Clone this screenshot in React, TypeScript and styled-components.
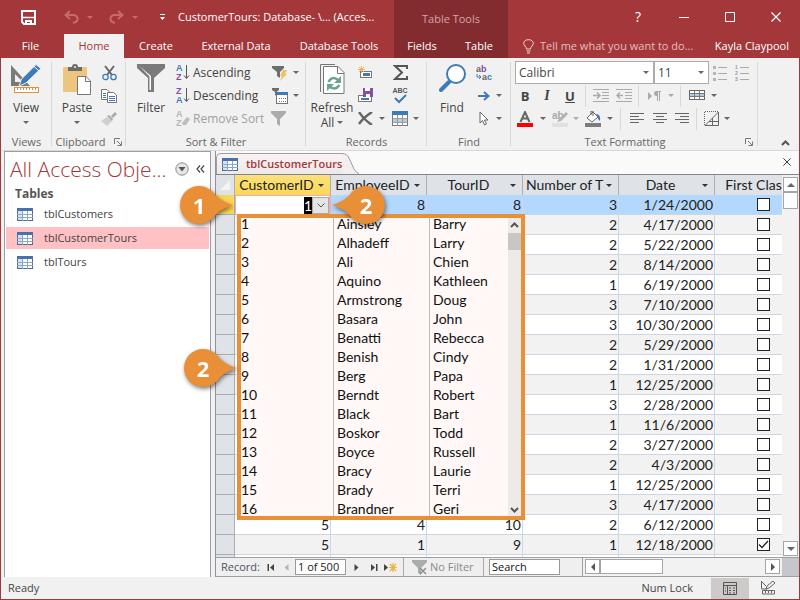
import React from "react";
import styled, { createGlobalStyle, css } from "styled-components";

const ui = `"Open Sans", "Noto Sans", sans-serif`;
const calibri = `Lato, "Open Sans", sans-serif`;

const c = {
  brand: "#a4373a",
  brandDark: "#832c2f",
  ribbon: "#f1f1f1",
  line: "#d8d8d8",
  text: "#444444",
  muted: "#666666",
  off: "#a0a0a0",
  blue: "#3f7ab8",
  purple: "#8250a8",
  callout: "#e88f38",
};

const Global = createGlobalStyle`
  *, *::before, *::after { box-sizing: border-box; }
  html, body, #root { height: 100%; }
  body { margin: 0; font: 12px/16px ${ui}; color: ${c.text}; background: ${c.ribbon}; }
  button, input, select { font: inherit; color: inherit; margin: 0; padding: 0; border: 0; background: none; border-radius: 0; outline: none; }
  button { white-space: nowrap; }
  svg { display: block; flex: none; }
`;

const Window = styled.div`
  display: flex;
  flex-direction: column;
  height: 100vh;
  min-height: 600px;
  min-width: 800px;
  overflow: hidden;
  background: ${c.ribbon};
  border: solid ${c.brand};
  border-width: 0 1px 1px 1px;
`;

/* ---------- title and tabs ---------- */
const Header = styled.header`
  display: grid;
  grid-template-columns: 393px 114px 1fr;
  background: ${c.brand};
  color: #fff;
  font-size: 11px;
`;
const HeaderCol = styled.div<{ $dark?: boolean }>`
  display: flex;
  flex-direction: column;
  min-width: 0;
  background: ${(p) => (p.$dark ? c.brandDark : "transparent")};
`;
const TitleRow = styled.div<{ $justify?: string }>`
  display: flex;
  align-items: center;
  justify-content: ${(p) => p.$justify || "flex-start"};
  height: 34px;
`;
const ContextTitle = styled.div`
  height: 34px;
  padding-top: 3px;
  line-height: 32px;
  text-align: center;
  color: #d3a5a6;
`;
const QuickBar = styled.div`
  display: flex;
  align-items: center;
  width: 177px;
  padding-left: 20px;
`;
const QuickButton = styled.button<{ $after: number }>`
  margin-right: ${(p) => p.$after}px;
`;
const DocTitle = styled.h1`
  margin: 0;
  font: 11px/20px ${ui};
  white-space: nowrap;
`;
const CaptionButton = styled.button`
  display: flex;
  align-items: center;
  justify-content: center;
  width: 46px;
  height: 32px;
  font-size: 14px;
`;
const TabRow = styled.div`
  display: flex;
  height: 24px;
`;
const RibbonTab = styled.button<{ $w: number; $active?: boolean; $first?: boolean }>`
  width: ${(p) => p.$w}px;
  padding-right: ${(p) => (p.$first ? 4 : 0)}px;
  text-align: center;
  line-height: 24px;
  ${(p) => p.$active && css`background: ${c.ribbon}; color: ${c.brand};`}
`;
const TellMe = styled.label`
  display: flex;
  flex: 1;
  align-items: center;
  gap: 6px;
  min-width: 0;
  padding-left: 15px;
`;
const TellInput = styled.input`
  flex: 1;
  min-width: 0;
  &::placeholder { color: #e5bfc0; opacity: 1; }
`;
const Account = styled.button`
  padding: 0 10px 0 6px;
`;

/* ---------- ribbon ---------- */
const Ribbon = styled.div`
  display: flex;
  height: 93px;
  border-bottom: 1px solid ${c.line};
  background: ${c.ribbon};
`;
const Group = styled.section<{ $w: number }>`
  display: flex;
  flex-direction: column;
  width: ${(p) => p.$w}px;
  position: relative;
  &::after {
    content: "";
    position: absolute;
    right: 0;
    top: 4px;
    bottom: 4px;
    width: 1px;
    background: ${c.line};
  }
`;
const GroupBody = styled.div`
  display: flex;
  height: 76px;
  padding: 3px 0 0 3px;
`;
const GroupLabel = styled.div`
  display: flex;
  align-items: center;
  justify-content: center;
  height: 16px;
  color: ${c.muted};
  font-size: 11px;
  white-space: nowrap;
`;
const Launcher = styled.button<{ $end?: boolean }>`
  margin-left: ${(p) => (p.$end ? "auto" : "9px")};
  margin-right: ${(p) => (p.$end ? "5px" : "0")};
`;
const LabelFill = styled.span`
  flex: 1;
  text-align: center;
  padding-right: 6px;
`;
const Big = styled.button<{ $w: number }>`
  display: flex;
  flex-direction: column;
  align-items: center;
  width: ${(p) => p.$w}px;
  padding-top: 3px;
`;
const BigIcon = styled.span`
  display: flex;
  align-items: flex-start;
  height: 36px;
`;
const BigText = styled.span`
  height: 15px;
  line-height: 15px;
`;
const BigLine = styled.span`
  display: flex;
  align-items: center;
  gap: 3px;
  height: 15px;
  line-height: 15px;
`;
const Stack = styled.div`
  display: grid;
  grid-auto-rows: 23px;
  align-items: center;
`;
const ToolRow = styled.div`
  display: flex;
  align-items: center;
  height: 23px;
`;
const Tool = styled.button<{ $w: number; $gap?: number }>`
  display: flex;
  align-items: center;
  justify-content: center;
  gap: ${(p) => p.$gap || 0}px;
  width: ${(p) => p.$w}px;
  height: 22px;
`;
const Glyph = styled(Tool)<{ $style: "bold" | "italic" | "underline" }>`
  font-size: 13px;
  ${(p) => p.$style === "bold" && css`font-weight: 700;`}
  ${(p) => p.$style === "italic" && css`font: italic 700 14px "Liberation Serif", serif;`}
  ${(p) => p.$style === "underline" && css`font-weight: 700; text-decoration: underline;`}
`;
const SortButton = styled.button<{ $off?: boolean }>`
  display: flex;
  align-items: center;
  gap: 3px;
  width: 94px;
  padding-left: 3px;
  color: ${(p) => (p.$off ? c.off : c.text)};
`;
const Divider = styled.span<{ $m: number }>`
  width: 1px;
  height: 22px;
  margin: 0 ${(p) => p.$m}px;
  background: ${c.line};
`;
const Combo = styled.span<{ $w: number }>`
  display: flex;
  align-items: center;
  position: relative;
  width: ${(p) => p.$w}px;
  height: 23px;
  border: 1px solid #ababab;
  background: #fff;
  svg { position: absolute; right: 4px; pointer-events: none; }
`;
const ComboSelect = styled.select`
  appearance: none;
  width: 100%;
  height: 100%;
  padding-left: 3px;
`;
const ComboGap = styled.span`
  width: 1px;
`;
const Collapse = styled.button`
  margin: auto 9px 4px auto;
`;

/* ---------- body ---------- */
const Body = styled.main`
  display: flex;
  flex: 1;
  min-height: 0;
  position: relative;
`;
const NavPane = styled.nav`
  width: 207px;
  margin-left: 3px;
  padding: 0 1px;
  border: solid #9a9ea6;
  border-width: 1px 1px 0 1px;
  background: #fff;
`;
const NavHead = styled.div`
  display: flex;
  align-items: center;
  height: 33px;
  padding: 0 4px;
`;
const NavTitle = styled.h2`
  flex: 1;
  min-width: 0;
  margin: 0;
  font: 300 21px/34px ${ui};
  color: ${c.brand};
  white-space: nowrap;
`;
const NavToggle = styled.button`
  margin-left: 7px;
`;
const NavSection = styled.h3`
  margin: 0;
  padding-left: 9px;
  font: 700 12px/18px ${ui};
  color: #555;
`;
const NavList = styled.ul`
  margin: 0;
  padding: 0;
  list-style: none;
`;
const NavItem = styled.a<{ $active?: boolean }>`
  display: flex;
  align-items: center;
  gap: 11px;
  height: 22px;
  margin-bottom: 2px;
  padding-left: 11px;
  font-size: 11px;
  color: ${c.text};
  text-decoration: none;
  background: ${(p) => (p.$active ? "#ffc1c3" : "transparent")};
`;

const Doc = styled.section`
  display: flex;
  flex: 1;
  flex-direction: column;
  min-width: 0;
  margin-left: 4px;
  border-left: 1px solid #8e9299;
`;
const DocTabs = styled.div`
  display: flex;
  align-items: flex-end;
  height: 24px;
  border-bottom: 1px solid #80868b;
  background: #fafafa;
`;
const DocTab = styled.button`
  display: flex;
  align-items: center;
  gap: 8px;
  height: 21px;
  padding-left: 5px;
  border: solid #9a9ea6;
  border-width: 1px 0 0 1px;
  border-top-left-radius: 5px;
  background: linear-gradient(#fcf3f2, #ece9ea);
  color: ${c.brand};
  font-size: 11px;
  font-weight: 600;
`;
const DocClose = styled.button`
  margin: 0 8px 8px auto;
`;
const DocMain = styled.div`
  display: flex;
  flex: 1;
  min-height: 0;
`;
const Sheet = styled.div`
  flex: 1;
  min-width: 0;
  overflow: hidden;
  background: #fff;
`;
const Grid = styled.table`
  width: 595px;
  table-layout: fixed;
  border-collapse: separate;
  border-spacing: 0;
  font: 14px/19px ${calibri};
  color: #222;
`;
const Col = styled.col<{ $w: number }>`
  width: ${(p) => p.$w}px;
`;
const Th = styled.th<{ $hot?: boolean }>`
  height: 20px;
  padding: 0;
  border-right: 1px solid #a9aeb6;
  background: ${(p) => (p.$hot ? "linear-gradient(#fbe07c, #fad857)" : "#dfe3e8")};
  font-weight: 400;
`;
const ThInner = styled.div`
  display: flex;
  align-items: center;
  height: 20px;
  padding-right: 6px;
`;
const ThText = styled.span`
  flex: 1;
  padding-bottom: 2px;
  overflow: hidden;
  text-align: center;
  white-space: nowrap;
`;
const LongText = styled(ThText)`
  padding-left: 3px;
  text-align: left;
`;
const Selector = styled.td<{ $hot?: boolean }>`
  height: 20px;
  padding: 0;
  border: solid #a9aeb6;
  border-width: 0 1px 1px 0;
  background: ${(p) => (p.$hot ? "#fad857" : "#dfe3e8")};
`;
const Row = styled.tr<{ $tone: "hot" | "odd" | "even" }>`
  background: ${(p) => ({ hot: "#b3d8fd", odd: "#ffffff", even: "#f2f2f2" })[p.$tone]};
`;
const Td = styled.td`
  height: 20px;
  padding: 1px 1px 0 0;
  border: solid #cfd6e3;
  border-width: 0 1px 1px 0;
  text-align: right;
  white-space: nowrap;
  line-height: 18px;
`;
const CheckTd = styled(Td)`
  padding: 0 0 0 1px;
`;
const Check = styled.input`
  appearance: none;
  display: block;
  width: 13px;
  height: 13px;
  && { margin: 0 auto; border: 1px solid #222; background: #fff; }
  &&:checked {
    background: #fff url("data:image/svg+xml,%3Csvg xmlns='http://www.w3.org/2000/svg' viewBox='0 0 11 11'%3E%3Cpath d='M1 5.500L4 8.500L10 2' fill='none' stroke='%23222' stroke-width='1.300'/%3E%3C/svg%3E");
  }
`;
const EditTd = styled.td`
  height: 20px;
  padding: 0;
  position: relative;
`;
const EditBox = styled.div`
  display: flex;
  align-items: center;
  justify-content: flex-end;
  height: 20px;
  border: solid #f8a9ae;
  border-width: 1px 2px 1px 1px;
  background: #fff;
`;
const EditInput = styled.input`
  width: 8px;
  height: 17px;
  background: #000;
  color: #fff;
  text-align: center;
`;
const EditDrop = styled.button`
  display: flex;
  align-items: center;
  justify-content: center;
  width: 17px;
  height: 17px;
  border: 1px solid #a9a9a9;
  background: #e4e4e4;
`;
const Popup = styled.div`
  display: flex;
  position: absolute;
  z-index: 2;
  left: 2px;
  top: 19px;
  width: 288px;
  height: 306px;
  overflow: hidden;
  border: 4px solid ${c.callout};
  background: #fff8f6;
`;
const PopupList = styled.ul`
  flex: 1;
  margin: -4px 0 0;
  padding: 0;
  list-style: none;
`;
const PopupItem = styled.li`
  display: grid;
  grid-template-columns: 93px 96px 1fr;
  height: 19px;
  text-align: left;
  line-height: 19px;
  color: #111;
`;
const PopupCell = styled.span<{ $rule?: boolean; $pad?: boolean }>`
  padding-left: ${(p) => (p.$pad ? 3 : 0)}px;
  border-right: ${(p) => (p.$rule ? "1px solid #c0bcbc" : "0")};
`;
const PopupScroll = styled.div`
  display: flex;
  flex-direction: column;
  align-items: center;
  width: 13px;
  padding: 4px 0 3px;
  background: #eeeae8;
`;
const PopupThumb = styled.div`
  width: 13px;
  height: 17px;
  margin: 5px 0 auto;
  background: #c9c7c5;
`;

const ScrollV = styled.div`
  display: flex;
  flex-direction: column;
  width: 17px;
  padding: 2px 1px 1px;
  background: #f2f2f2;
`;
const ScrollButton = styled.button`
  display: flex;
  align-items: center;
  justify-content: center;
  width: 15px;
  height: 15px;
  && { border: 1px solid #a5a5a5; background: #fff; }
`;
const ThumbV = styled.div`
  width: 15px;
  height: 17px;
  margin-bottom: auto;
  border: 1px solid #a5a5a5;
  background: #fff;
`;
const RecordBar = styled.div`
  display: flex;
  align-items: center;
  height: 20px;
  border: solid #a0a0a0;
  border-width: 1px 0;
  background: #efefef;
  font-size: 11px;
`;
const RecordLabel = styled.span`
  width: 46px;
  padding-left: 5px;
  color: #4a5560;
`;
const NavButton = styled.button<{ $w: number }>`
  display: flex;
  align-items: center;
  justify-content: center;
  width: ${(p) => p.$w}px;
  height: 18px;
`;
const RecordInput = styled.input<{ $w: number }>`
  width: ${(p) => p.$w}px;
  height: 16px;
  padding-left: 2px;
  border: 1px solid #999;
  background: #fff;
  color: #222;
  &::placeholder { color: #111; opacity: 1; }
`;
const NoFilter = styled.button`
  display: flex;
  align-items: center;
  gap: 3px;
  width: 81px;
  height: 18px;
  margin: 0 5px 0 4px;
  padding-left: 8px;
  border: solid #b0a8a8;
  border-width: 0 1px;
  color: #8a8a8a;
`;
const ScrollH = styled.div`
  display: flex;
  flex: 1;
  height: 18px;
  margin-left: 22px;
  padding: 1px 2px;
  border-left: 1px solid #a0a0a0;
  background: #f2f2f2;
`;
const ThumbH = styled.div`
  width: 63px;
  height: 15px;
  margin-right: auto;
  border: 1px solid #a5a5a5;
  background: #fff;
`;
const Corner = styled.div`
  width: 17px;
  height: 18px;
  background: #c5c7cc;
`;

/* ---------- status ---------- */
const Status = styled.footer`
  display: flex;
  align-items: center;
  height: 22px;
  padding: 0 12px 0 7px;
  font-size: 11px;
`;
const StatusKey = styled.span`
  margin: 0 18px 0 auto;
`;
const ViewButton = styled.button<{ $active?: boolean }>`
  display: flex;
  align-items: center;
  justify-content: center;
  width: 38px;
  height: 21px;
  background: ${(p) => (p.$active ? "#cdcac9" : "transparent")};
`;

/* ---------- callouts ---------- */
const CalloutBox = styled.div<{ $x: number; $y: number; $flip?: boolean }>`
  position: absolute;
  z-index: 5;
  left: ${(p) => p.$x}px;
  top: ${(p) => p.$y}px;
  display: flex;
  justify-content: ${(p) => (p.$flip ? "flex-end" : "flex-start")};
  width: 53px;
  height: 38px;
  filter: drop-shadow(1px 2px 2px rgba(0, 0, 0, 0.5));
`;
const CalloutShape = styled.svg<{ $flip?: boolean }>`
  position: absolute;
  inset: 0;
  transform: ${(p) => (p.$flip ? "scaleX(-1)" : "none")};
`;
const CalloutText = styled.span`
  position: relative;
  width: 38px;
  font: 700 22px/38px ${ui};
  text-align: center;
  color: #fff;
`;

function Callout({ n, x, y, flip }: { n: number; x: number; y: number; flip?: boolean }) {
  return (
    <CalloutBox $x={x} $y={y} $flip={flip}>
      <CalloutShape $flip={flip} width="53" height="38" viewBox="0 0 53 38" fill={c.callout}>
        <circle cx="19" cy="19" r="19" />
        <path d="M32 5Q39 15 53 19Q39 23 32 33Z" />
      </CalloutShape>
      <CalloutText>{n}</CalloutText>
    </CalloutBox>
  );
}

/* ---------- icons ---------- */
const Caret = ({ color = "#666", w = 6 }: { color?: string; w?: number }) => (
  <svg width={w} height="3" viewBox="0 0 6 3" preserveAspectRatio="none" fill={color}>
    <path d="M0 0H6L3 3Z" />
  </svg>
);
const Tri = ({ dir, color = "#444" }: { dir: "up" | "down" | "left" | "right"; color?: string }) => {
  const d = { up: "M0 6L4 2L8 6Z", down: "M0 2L4 6L8 2Z", left: "M6 0L2 4L6 8Z", right: "M2 0L6 4L2 8Z" }[dir];
  return <svg width="8" height="8" fill={color}><path d={d} /></svg>;
};
const SaveIcon = () => (
  <svg width="15" height="15" viewBox="0 0 15 15" fill="none" stroke="#fff" strokeWidth="2">
    <path d="M1 1H14V14H3L1 12Z" /><path d="M2 7.500H13" strokeWidth="1.500" /><path d="M5 14V11H10V14" strokeWidth="2" />
  </svg>
);
const UndoIcon = ({ flip }: { flip?: boolean }) => (
  <svg width="15" height="14" viewBox="0 0 15 14" fill="none" stroke="#c56b6d" strokeWidth="2">
    <g transform={flip ? "matrix(-1 0 0 1 15 0)" : undefined}>
      <path d="M6 1L1.500 5L6 9" /><path d="M2 5H9Q13.500 5 13.500 9Q13.500 12 9 13" />
    </g>
  </svg>
);
const LauncherIcon = () => (
  <svg width="8" height="8" viewBox="0 0 8 8" fill="none" stroke="#777"><path d="M.5 6V.5H6M3 3L7 7M7.500 3.500V7.500H3.500" /></svg>
);
const ViewIcon = () => (
  <svg width="30" height="30" viewBox="0 0 30 30">
    <path d="M0 1V22H19ZM4 10L12 18H4Z" fill="#7a7a7a" fillRule="evenodd" />
    <path d="M8 22L10.500 15L25 .5L30 4.500L15 19Z" fill={c.blue} stroke="#f1f1f1" />
    <path d="M23 2.500L28 7" stroke="#fff" />
    <rect x="3.500" y="23.500" width="24" height="5" fill="#fff" stroke="#e39038" />
    <path d="M6.500 24V26M9.500 24V26M12.500 24V26M15.500 24V26M18.500 24V26M21.500 24V26M24.500 24V26" stroke="#e39038" />
  </svg>
);
const PasteIcon = () => (
  <svg width="29" height="31" viewBox="0 0 29 31">
    <rect x="0" y="3" width="24" height="25" rx="1" fill="#ecc67f" />
    <path d="M5 7V3H9Q9 0 12 0Q15 0 15 3H19V7Z" fill="#6b6b6b" /><circle cx="12" cy="3" r="1" fill="#f1f1f1" />
    <path d="M14.500 12.500H23L27.500 17V30.500H14.500Z" fill="#fff" stroke="#777" /><path d="M22.500 12.500V17.500H27.500" fill="none" stroke="#777" />
  </svg>
);
const CutIcon = () => (
  <svg width="15" height="16" viewBox="0 0 15 16" fill="none">
    <path d="M3 1L10 10M12 1L5 10" stroke="#666" strokeWidth="2" />
    <circle cx="3.500" cy="12" r="2.700" stroke={c.blue} strokeWidth="1.300" /><circle cx="11.500" cy="12" r="2.700" stroke={c.blue} strokeWidth="1.300" />
  </svg>
);
const CopyIcon = () => (
  <svg width="16" height="14" viewBox="0 0 16 14">
    <path d="M.5.5H6L8.500 3V10.500H.5Z" fill="#fff" stroke="#777" /><path d="M2 4.500H5M2 6.500H5M2 8.500H5" stroke={c.blue} />
    <path d="M6.500 3.500H12.500L15.500 6V13.500H6.500Z" fill="#fff" stroke="#777" /><path d="M8 7.500H14M8 9.500H14M8 11.500H14" stroke={c.blue} />
  </svg>
);
const BrushIcon = () => (
  <svg width="16" height="14" viewBox="0 0 16 14">
    <path d="M0 9L6 5L11 9L6 14Z" fill="#cfcfcf" /><path d="M6 4L8 3L12 7L11 9Z" fill="#aaa" /><path d="M10 4L14 0L16 2L12 6Z" fill="#aaa" />
  </svg>
);
const FunnelBig = () => (
  <svg width="28" height="28" viewBox="0 0 28 28"><path d="M0 0H28V4L17 14V28H11V14L0 4Z" fill="#7a7a7a" /><path d="M2.500 2L12.500 12.500V26H14V12Z" fill="#fff" /></svg>
);
const SortIcon = ({ up, down, off }: { up: string; down: string; off?: boolean }) => (
  <svg width="14" height="17" viewBox="0 0 14 17" fontFamily="Liberation Sans, sans-serif" fontSize="9" fontWeight="700">
    <text x="0" y="7" fill={off ? "#b5b5b5" : up === "A" ? c.blue : c.purple}>{up}</text>
    <text x="0" y="16" fill={off ? "#b5b5b5" : down === "A" ? c.blue : c.purple}>{down}</text>
    {off ? <path d="M6 13L11 7L14 9L10 15H7Z" fill="#bdbdbd" /> : <path d="M10.500 1V14M8 11.500L10.500 14.500L13 11.500" fill="none" stroke="#555" />}
  </svg>
);
const FilterBolt = () => (
  <svg width="16" height="16" viewBox="0 0 16 16"><path d="M0 1H12V3L8 7V13L5 11V7L0 3Z" fill="#6e6e6e" /><path d="M11 5H15L13 9H15L8 16L10 11H8Z" fill="#ecc067" /></svg>
);
const FilterForm = () => (
  <svg width="16" height="16" viewBox="0 0 16 16"><rect x="4.500" y="4.500" width="11" height="11" fill="#fff" stroke="#777" /><path d="M4 4H16V7H4Z" fill={c.blue} />
    <path d="M7 10.500H14M7 13.500H14" stroke="#777" strokeDasharray="1 1" /><path d="M0 0H7V2L4.500 4V8L3 7V4L0 2Z" fill="#6e6e6e" /></svg>
);
const FunnelSmall = ({ x }: { x?: boolean }) => (
  <svg width="15" height="15" viewBox="0 0 15 15"><path d="M0 0H15V2L9 8V15L6 13V8L0 2Z" fill="#ababab" />{x && <path d="M8 8L14 14M14 8L8 14" stroke="#8f8f8f" strokeWidth="1.500" />}</svg>
);
const RefreshIcon = () => (
  <svg width="25" height="31" viewBox="0 0 25 31" fill="none">
    <path d="M.5 28V.5H15" stroke="#777" /><path d="M3.500 2.500H18L24 8.500V29.500H3.500Z" fill="#fff" stroke="#777" /><path d="M17.500 3V9.500H24" stroke="#777" />
    <path d="M8.500 18Q12 11 19 16.500M19.500 21Q15 27.500 9 22" stroke="#69a58b" strokeWidth="2.500" /><path d="M21 12V19H14ZM7 27V20H14Z" fill="#69a58b" />
  </svg>
);
const NewRecord = () => (
  <svg width="15" height="13" viewBox="0 0 15 13"><rect x="2.500" y="5.500" width="11" height="6" fill="#fff" stroke="#777" /><path d="M5 7H12V10H5Z" fill={c.blue} />
    <path d="M3.500 0V7M0 3.500H7M1 1L6 6M6 1L1 6" stroke="#ebb660" /></svg>
);
const SaveRecord = () => (
  <svg width="15" height="15" viewBox="0 0 15 15"><rect x=".5" y="7.500" width="13" height="6" fill="#fff" stroke="#777" /><path d="M3 10H11V12H3Z" fill={c.blue} />
    <path d="M5 0H15V9H5Z" fill={c.purple} /><path d="M7 0H12V3H7ZM8 6H12V9H8Z" fill="#fff" /></svg>
);
const DeleteIcon = () => (
  <svg width="15" height="13" viewBox="0 0 15 13" fill="none" stroke="#666"><path d="M1 0Q6 8 14 13" strokeWidth="2.500" /><path d="M14 0Q5 6 1 12" strokeWidth="2.500" /></svg>
);
const SumIcon = () => (
  <svg width="15" height="15" viewBox="0 0 15 15" fill="none" stroke="#555" strokeWidth="2"><path d="M14 4V1H2L9 7.500L2 14H14V11" /></svg>
);
const SpellIcon = () => (
  <svg width="16" height="17" viewBox="0 0 16 17"><text x="8" y="6" textAnchor="middle" fontFamily="Liberation Sans, sans-serif" fontSize="7" fontWeight="700" fill="#555">ABC</text><path d="M3 11L7 15L14 8" fill="none" stroke={c.blue} strokeWidth="2" /></svg>
);
const TableIcon = () => (
  <svg width="16" height="15" viewBox="0 0 16 15"><rect x=".5" y=".5" width="15" height="14" fill="#fff" stroke="#777" /><path d="M0 0H16V4H0Z" fill={c.blue} /><path d="M1 7H15V11H1Z" fill="#b9cde0" /><path d="M0 7.500H16M0 11.500H16M5.500 4V15M10.500 4V15" stroke="#999" /></svg>
);
const FindIcon = () => (
  <svg width="27" height="28" viewBox="0 0 27 28"><path d="M10 18L2 26" stroke={c.blue} strokeWidth="4" strokeLinecap="round" /><circle cx="17" cy="10" r="9" fill="#fff" stroke={c.blue} strokeWidth="2" /></svg>
);
const ReplaceIcon = () => (
  <svg width="17" height="18" viewBox="0 0 17 18" fontFamily="Liberation Sans, sans-serif" fontSize="9" fontWeight="700"><text x="0" y="8" fill="#666">a<tspan fill={c.purple}>b</tspan></text><text x="6" y="16" fill="#666">a<tspan fill={c.blue}>c</tspan></text><path d="M1 10V13H4M3 11L5 13L3 15" fill="none" stroke={c.blue} /></svg>
);
const GoToIcon = () => (
  <svg width="12" height="10" viewBox="0 0 12 10" fill="none" stroke={c.blue} strokeWidth="2"><path d="M0 5H10M6 1L10.500 5L6 9" /></svg>
);
const PointerIcon = () => (
  <svg width="10" height="15" viewBox="0 0 10 15" fill="#fff" stroke="#666"><path d="M1 1V12L3.500 9.500L5.500 14L7.500 13L5.500 9H9Z" /></svg>
);
const ListIcon = ({ num }: { num?: boolean }) => (
  <svg width="15" height="16" viewBox="0 0 15 16"><path d="M5 2.500H14M5 8.500H14M5 14.500H14" stroke="#aaa" />
    {num ? <g fontFamily="Liberation Sans, sans-serif" fontSize="5" fontWeight="700" fill="#999"><text x="0" y="4">1</text><text x="0" y="10">2</text><text x="0" y="16">3</text></g>
      : <path d="M0 1H3V4H0ZM0 7H3V10H0ZM0 13H3V16H0Z" fill="#b5b5b5" />}</svg>
);
const IndentIcon = ({ out }: { out?: boolean }) => (
  <svg width="16" height="13" viewBox="0 0 16 13" fill="none" stroke="#aaa"><path d="M0 .5H16M9 3.500H16M9 6.500H16M9 9.500H16M0 12.500H16" />{out ? <path d="M7 6.500H1M4 3.500L1 6.500L4 9.500" strokeWidth="1.500" /> : <path d="M0 6.500H6M4 3.500L7 6.500L4 9.500" strokeWidth="1.500" />}</svg>
);
const ParaIcon = () => (
  <svg width="13" height="10" viewBox="0 0 13 10" fill="#aaa"><path d="M0 1L4 5L0 9Z" /><path d="M8 0H13V1H12V10H11V1H10V10H9V5Q6 5 6 2.500Q6 0 8 0Z" /></svg>
);
const BandIcon = () => (
  <svg width="16" height="11" viewBox="0 0 16 11"><rect x=".5" y=".5" width="15" height="9" fill="#fff" stroke="#666" /><path d="M1 4H15V7H1Z" fill="#b4cce2" /><path d="M0 3.500H16M0 6.500H16M5.500 0V10M10.500 0V10" stroke="#777" /></svg>
);
const FontColorIcon = () => (
  <svg width="16" height="16" viewBox="0 0 16 16"><path d="M3.500 11L8 1L12.500 11M5.500 7.500H10.500" fill="none" stroke="#666" strokeWidth="2" /><path d="M0 12H16V16H0Z" fill="#f00" /></svg>
);
const HighlightIcon = () => (
  <svg width="17" height="16" viewBox="0 0 17 16"><text x="0" y="8" fontFamily="Liberation Sans, sans-serif" fontSize="10" fontWeight="700" fill="#aaa">ab</text><path d="M5 11L7 8L14 1L16 3L9 10Z" fill="#b0b0b0" /><path d="M0 12H16V16H0Z" fill="#e3e0e3" /></svg>
);
const FillIcon = () => (
  <svg width="16" height="16" viewBox="0 0 16 16"><path d="M2 7L8 1L13 6L7 11Z" fill="#fff" stroke="#666" /><path d="M6 4V0H8V5" fill="none" stroke="#666" /><path d="M11 3Q16 3 15 10L13 8V6Z" fill={c.blue} /><path d="M0 12H16V16H0Z" fill="#7d7d7d" /></svg>
);
const AlignIcon = ({ a }: { a: "l" | "c" | "r" }) => (
  <svg width="14" height="11" viewBox="0 0 14 11" stroke="#666"><path d={{ l: "M0 .5H14M0 3.500H9M0 6.500H14M0 9.500H9", c: "M0 .5H14M3 3.500H11M0 6.500H14M3 9.500H11", r: "M0 .5H14M5 3.500H14M0 6.500H14M5 9.500H14" }[a]} /></svg>
);
const GridlinesIcon = () => (
  <svg width="15" height="15" viewBox="0 0 15 15" fill="none" stroke="#666"><path d="M.5 14V.5H14" strokeDasharray="1 1" /><path d="M1 14.500L14.500 1V14.500ZM8.500 14V7M5 10.500H14" /></svg>
);
const BulbIcon = () => (
  <svg width="11" height="15" viewBox="0 0 11 15" fill="none" stroke="#f0d8d8"><path d="M3.500 10Q3.500 8.500 2 7Q.7 5.500 .7 4.500Q1 .7 5.500 .7Q10 .7 10.300 4.500Q10.300 5.500 9 7Q7.500 8.500 7.500 10ZM3.500 12H7.500M4 14H7" /></svg>
);
const Datasheet = () => (
  <svg width="16" height="13" viewBox="0 0 16 13"><rect x=".5" y=".5" width="15" height="12" fill="#fff" stroke="#4d6a94" /><path d="M0 0H16V3H0Z" fill="#4772ad" /><path d="M1 3H5V12H1Z" fill="#d6e3f3" /><path d="M0 6.500H16M0 9.500H16M5.500 3V13M10.500 3V13" stroke="#8ca6c8" /></svg>
);
const NavMenuIcon = () => (
  <svg width="14" height="14" viewBox="0 0 14 14"><circle cx="7" cy="7" r="6.200" fill="#e6e6e6" stroke="#8d8d8d" /><path d="M3.500 5H10.500L7 9.500Z" fill="#555" /></svg>
);
const Chevrons = () => (
  <svg width="9" height="8" viewBox="0 0 9 8" fill="none" stroke="#444" strokeWidth="1.200"><path d="M4 .5L1 4L4 7.500M8 .5L5 4L8 7.500" /></svg>
);
const ChevronSmall = ({ up, color = "#555" }: { up?: boolean; color?: string }) => (
  <svg width="9" height="6" viewBox="0 0 9 6" fill="none" stroke={color} strokeWidth="2"><path d={up ? "M1 5L4.500 1.500L8 5" : "M1 1L4.500 4.500L8 1"} /></svg>
);
const CloseIcon = ({ s = 10, color = "#fff" }: { s?: number; color?: string }) => (
  <svg width={s} height={s} viewBox="0 0 10 10" stroke={color} strokeWidth="1.200"><path d="M.5.5L9.500 9.500M9.500.5L.5 9.500" /></svg>
);
const RecordArrow = ({ bar, left, off }: { bar?: boolean; left?: boolean; off?: boolean }) => (
  <svg width="7" height="7" viewBox="0 0 7 7" fill={off ? "#b5b5b5" : "#444"}><g transform={left ? "matrix(-1 0 0 1 7 0)" : undefined}><path d={bar ? "M0 0L4 3.500L0 7ZM5 0H6.500V7H5Z" : "M1.500 0L5.500 3.500L1.500 7Z"} /></g></svg>
);
const NewRecordArrow = () => (
  <svg width="13" height="9" viewBox="0 0 13 9"><path d="M0 1L4 4.500L0 8Z" fill="#444" /><path d="M9 0V9M5 4.500H13M6 1L12 8M12 1L6 8" stroke="#e9b440" strokeWidth="1.200" /></svg>
);
const SheetView = () => (
  <svg width="14" height="13" viewBox="0 0 14 13" fill="none" stroke="#555"><path d="M.5.5H13.500V12.500H.5ZM0 3.500H14M4.500 3V13M2 6H3M2 9H3M6 6H8M6 8.500H8M6 11H8M10 6H12M10 8.500H12M10 11H12" /></svg>
);
const DesignView = () => (
  <svg width="15" height="14" viewBox="0 0 15 14" fill="none" stroke="#666"><path d="M.5 0V8H6M1 1L5 5M5 8L6 5L12 0L14 2L8 7Z" /><path d="M1.500 9.500H13.500V13H1.500ZM4.500 10V12M7.500 10V12M10.500 10V12" /></svg>
);

/* ---------- data ---------- */
type Rec = [string, string, string, number, string];
const records: Rec[] = [
  ["1", "8", "8", 3, "1/24/2000"],
  ["", "", "", 2, "4/17/2000"],
  ["", "", "", 2, "5/22/2000"],
  ["", "", "", 2, "8/14/2000"],
  ["", "", "", 1, "6/19/2000"],
  ["", "", "", 3, "7/10/2000"],
  ["", "", "", 3, "10/30/2000"],
  ["", "", "", 2, "5/29/2000"],
  ["", "", "", 2, "1/31/2000"],
  ["", "", "", 1, "12/25/2000"],
  ["", "", "", 3, "2/28/2000"],
  ["", "", "", 1, "11/6/2000"],
  ["", "", "", 2, "3/27/2000"],
  ["", "", "", 2, "4/3/2000"],
  ["", "", "", 1, "12/25/2000"],
  ["", "", "", 3, "4/17/2000"],
  ["5", "4", "10", 2, "6/12/2000"],
  ["5", "1", "9", 1, "12/18/2000"],
];
const customers = [
  ["Ainsley", "Barry"], ["Alhadeff", "Larry"], ["Ali", "Chien"], ["Aquino", "Kathleen"],
  ["Armstrong", "Doug"], ["Basara", "John"], ["Benatti", "Rebecca"], ["Benish", "Cindy"],
  ["Berg", "Papa"], ["Berndt", "Robert"], ["Black", "Bart"], ["Boskor", "Todd"],
  ["Boyce", "Russell"], ["Bracy", "Laurie"], ["Brady", "Terri"], ["Brandner", "Geri"],
];
const columns = ["CustomerID", "EmployeeID", "TourID", "Number of T", "Date", "First Class"];

function CustomerPicker() {
  return (
    <EditTd>
      <EditBox>
        <EditInput aria-label="CustomerID" defaultValue="1" />
        <EditDrop aria-label="Show customers"><svg width="8" height="5" viewBox="0 0 8 5" fill="none" stroke="#555"><path d="M.5.5L4 4L7.500.5" /></svg></EditDrop>
      </EditBox>
      <Popup>
        <PopupList>
          {customers.map(([last, first], i) => (
            <PopupItem key={last}>
              <PopupCell $rule>{i + 1}</PopupCell>
              <PopupCell $rule $pad>{last}</PopupCell>
              <PopupCell $pad>{first}</PopupCell>
            </PopupItem>
          ))}
        </PopupList>
        <PopupScroll><ChevronSmall up /><PopupThumb /><ChevronSmall /></PopupScroll>
      </Popup>
    </EditTd>
  );
}

function DataGrid() {
  return (
    <Grid>
      <colgroup>
        <Col $w={19} />
        {columns.map((n) => <Col key={n} $w={96} />)}
      </colgroup>
      <thead>
        <tr>
          <Th aria-label="Select all"><svg width="18" height="20"><path d="M4 15L14 5V15Z" fill="#f2f4f6" /></svg></Th>
          {columns.map((n, i) => {
            const Text = i === 3 ? LongText : ThText;
            return <Th key={n} $hot={i === 0}><ThInner><Text>{n}</Text><Caret color="#333" /></ThInner></Th>;
          })}
        </tr>
      </thead>
      <tbody>
        {records.map((r, i) => (
          <Row key={i} $tone={i === 0 ? "hot" : i % 2 ? "even" : "odd"}>
            <Selector $hot={i === 0} />
            {i === 0 ? <CustomerPicker /> : <Td>{r[0]}</Td>}
            <Td>{r[1]}</Td>
            <Td>{r[2]}</Td>
            <Td>{r[3]}</Td>
            <Td>{r[4]}</Td>
            <CheckTd><Check type="checkbox" aria-label={`First Class, record ${i + 1}`} defaultChecked={i === 17} /></CheckTd>
          </Row>
        ))}
        <Row $tone="odd"><Selector /><Td /><Td /><Td /><Td /><Td /><Td /></Row>
      </tbody>
    </Grid>
  );
}

function TitleBar() {
  return (
    <Header>
      <HeaderCol>
        <TitleRow>
          <QuickBar>
            <QuickButton $after={28} aria-label="Save"><SaveIcon /></QuickButton>
            <QuickButton $after={8} aria-label="Undo"><UndoIcon /></QuickButton>
            <QuickButton $after={16} aria-label="Undo options"><Caret color="#c56b6d" /></QuickButton>
            <QuickButton $after={8} aria-label="Redo"><UndoIcon flip /></QuickButton>
            <QuickButton $after={22} aria-label="Redo options"><Caret color="#c56b6d" /></QuickButton>
            <QuickButton $after={0} aria-label="Customize toolbar"><svg width="5" height="6" fill="#fff"><path d="M0 0H5V1H0ZM0 3H5L2.500 6Z" /></svg></QuickButton>
          </QuickBar>
          <DocTitle>CustomerTours: Database- \... (Acces...</DocTitle>
        </TitleRow>
        <TabRow>
          <RibbonTab $w={63} $first>File</RibbonTab>
          <RibbonTab $w={60} $active>Home</RibbonTab>
          <RibbonTab $w={64}>Create</RibbonTab>
          <RibbonTab $w={96}>External Data</RibbonTab>
          <RibbonTab $w={110}>Database Tools</RibbonTab>
        </TabRow>
      </HeaderCol>
      <HeaderCol $dark>
        <ContextTitle>Table Tools</ContextTitle>
        <TabRow>
          <RibbonTab $w={56}>Fields</RibbonTab>
          <RibbonTab $w={58}>Table</RibbonTab>
        </TabRow>
      </HeaderCol>
      <HeaderCol>
        <TitleRow $justify="flex-end">
          <CaptionButton aria-label="Help">?</CaptionButton>
          <CaptionButton aria-label="Minimize"><svg width="10" height="1"><rect width="10" height="1" fill="#fff" /></svg></CaptionButton>
          <CaptionButton aria-label="Maximize"><svg width="10" height="10" fill="none" stroke="#fff"><path d="M.5.5H9.500V9.500H.5Z" /></svg></CaptionButton>
          <CaptionButton aria-label="Close"><CloseIcon /></CaptionButton>
        </TitleRow>
        <TabRow>
          <TellMe><BulbIcon /><TellInput aria-label="Tell me" placeholder="Tell me what you want to do..." /></TellMe>
          <Account>Kayla Claypool</Account>
        </TabRow>
      </HeaderCol>
    </Header>
  );
}

function RibbonBar() {
  return (
    <Ribbon>
      <Group $w={51}>
        <GroupBody>
          <Big $w={44}><BigIcon><ViewIcon /></BigIcon><BigText>View</BigText><BigLine><Caret /></BigLine></Big>
        </GroupBody>
        <GroupLabel>Views</GroupLabel>
      </Group>
      <Group $w={74}>
        <GroupBody>
          <Big $w={44}><BigIcon><PasteIcon /></BigIcon><BigText>Paste</BigText><BigLine><Caret /></BigLine></Big>
          <Stack>
            <Tool $w={20} aria-label="Cut"><CutIcon /></Tool>
            <Tool $w={20} aria-label="Copy"><CopyIcon /></Tool>
            <Tool $w={20} aria-label="Format Painter"><BrushIcon /></Tool>
          </Stack>
        </GroupBody>
        <GroupLabel>Clipboard<Launcher aria-label="Clipboard options"><LauncherIcon /></Launcher></GroupLabel>
      </Group>
      <Group $w={180}>
        <GroupBody>
          <Big $w={44}><BigIcon><FunnelBig /></BigIcon><BigText>Filter</BigText></Big>
          <Stack>
            <SortButton><SortIcon up="A" down="Z" />Ascending</SortButton>
            <SortButton><SortIcon up="Z" down="A" />Descending</SortButton>
            <SortButton $off><SortIcon up="A" down="Z" off />Remove Sort</SortButton>
          </Stack>
          <Stack>
            <Tool $w={36} $gap={5} aria-label="Selection"><FilterBolt /><Caret /></Tool>
            <Tool $w={36} $gap={5} aria-label="Advanced"><FilterForm /><Caret /></Tool>
            <Tool $w={22} aria-label="Toggle Filter"><FunnelSmall /></Tool>
          </Stack>
        </GroupBody>
        <GroupLabel>Sort &amp; Filter</GroupLabel>
      </Group>
      <Group $w={121}>
        <GroupBody>
          <Big $w={46}><BigIcon><RefreshIcon /></BigIcon><BigText>Refresh</BigText><BigLine>All<Caret /></BigLine></Big>
          <Stack>
            <ToolRow><Tool $w={20} aria-label="New"><NewRecord /></Tool></ToolRow>
            <ToolRow><Tool $w={20} aria-label="Save record"><SaveRecord /></Tool></ToolRow>
            <ToolRow><Tool $w={20} aria-label="Delete"><DeleteIcon /></Tool><Tool $w={13} aria-label="Delete options"><Caret /></Tool></ToolRow>
          </Stack>
          <Stack>
            <ToolRow><Tool $w={24} aria-label="Totals"><SumIcon /></Tool></ToolRow>
            <ToolRow><Tool $w={24} aria-label="Spelling"><SpellIcon /></Tool></ToolRow>
            <ToolRow><Tool $w={24} aria-label="More"><TableIcon /></Tool><Tool $w={8} aria-label="More options"><Caret /></Tool></ToolRow>
          </Stack>
        </GroupBody>
        <GroupLabel>Records</GroupLabel>
      </Group>
      <Group $w={84}>
        <GroupBody>
          <Big $w={44}><BigIcon><FindIcon /></BigIcon><BigText>Find</BigText></Big>
          <Stack>
            <ToolRow><Tool $w={20} aria-label="Replace"><ReplaceIcon /></Tool></ToolRow>
            <ToolRow><Tool $w={20} aria-label="Go To"><GoToIcon /></Tool><Tool $w={10} aria-label="Go To options"><Caret /></Tool></ToolRow>
            <ToolRow><Tool $w={20} aria-label="Select"><PointerIcon /></Tool><Tool $w={10} aria-label="Select options"><Caret /></Tool></ToolRow>
          </Stack>
        </GroupBody>
        <GroupLabel>Find</GroupLabel>
      </Group>
      <Group $w={247}>
        <GroupBody>
          <Stack>
            <ToolRow>
              <ComboGap />
              <Combo $w={139}><ComboSelect aria-label="Font"><option>Calibri</option></ComboSelect><Caret /></Combo>
              <Combo $w={55}><ComboSelect aria-label="Font size"><option>11</option></ComboSelect><Caret /></Combo>
              <Tool $w={22} aria-label="Bullets"><ListIcon /></Tool>
              <Tool $w={22} aria-label="Numbering"><ListIcon num /></Tool>
            </ToolRow>
            <ToolRow>
              <Glyph $w={22} $style="bold">B</Glyph>
              <Glyph $w={22} $style="italic">I</Glyph>
              <Glyph $w={24} $style="underline">U</Glyph>
              <Divider $m={3} />
              <Tool $w={24} aria-label="Increase indent"><IndentIcon /></Tool>
              <Tool $w={22} aria-label="Decrease indent"><IndentIcon out /></Tool>
              <Divider $m={3} />
              <Tool $w={24} aria-label="Text direction"><ParaIcon /></Tool>
              <Tool $w={10} aria-label="Text direction options"><Caret color="#aaa" /></Tool>
              <Divider $m={4} />
              <Tool $w={24} aria-label="Alternate row color"><BandIcon /></Tool>
              <Tool $w={10} aria-label="Row color options"><Caret /></Tool>
            </ToolRow>
            <ToolRow>
              <Tool $w={22} aria-label="Font color"><FontColorIcon /></Tool>
              <Tool $w={14} aria-label="Font color options"><Caret /></Tool>
              <Tool $w={20} aria-label="Highlight"><HighlightIcon /></Tool>
              <Tool $w={12} aria-label="Highlight options"><Caret color="#aaa" /></Tool>
              <Tool $w={22} aria-label="Background color"><FillIcon /></Tool>
              <Tool $w={12} aria-label="Background options"><Caret /></Tool>
              <Divider $m={4} />
              <Tool $w={24} aria-label="Align left"><AlignIcon a="l" /></Tool>
              <Tool $w={22} aria-label="Center"><AlignIcon a="c" /></Tool>
              <Tool $w={22} aria-label="Align right"><AlignIcon a="r" /></Tool>
              <Divider $m={3} />
              <Tool $w={22} aria-label="Gridlines"><GridlinesIcon /></Tool>
              <Tool $w={10} aria-label="Gridlines options"><Caret /></Tool>
            </ToolRow>
          </Stack>
        </GroupBody>
        <GroupLabel><LabelFill>Text Formatting</LabelFill><Launcher $end aria-label="Text options"><LauncherIcon /></Launcher></GroupLabel>
      </Group>
      <Collapse aria-label="Collapse ribbon"><ChevronSmall up /></Collapse>
    </Ribbon>
  );
}

export default function App() {
  return (
    <Window>
      <Global />
      <TitleBar />
      <RibbonBar />
      <Body>
        <NavPane>
          <NavHead>
            <NavTitle>All Access Obje...</NavTitle>
            <NavToggle aria-label="Navigation menu"><NavMenuIcon /></NavToggle>
            <NavToggle aria-label="Hide pane"><Chevrons /></NavToggle>
          </NavHead>
          <NavSection>Tables</NavSection>
          <NavList>
            {["tblCustomers", "tblCustomerTours", "tblTours"].map((n, i) => (
              <li key={n}><NavItem href={`#${n}`} $active={i === 1}><Datasheet />{n}</NavItem></li>
            ))}
          </NavList>
        </NavPane>
        <Doc>
          <DocTabs>
            <DocTab><Datasheet />tblCustomerTours</DocTab>
            <svg width="17" height="21" viewBox="0 0 17 21"><path d="M0 .5Q5 .5 7 5L12 16Q14 20 17 21H0Z" fill="#f4eeee" /><path d="M0 .5Q5 .5 7 5L12 16Q14 20 17 20.500" fill="none" stroke="#9a9ea6" /></svg>
            <DocClose aria-label="Close table"><CloseIcon s={8} color="#333" /></DocClose>
          </DocTabs>
          <DocMain>
            <Sheet><DataGrid /></Sheet>
            <ScrollV>
              <ScrollButton aria-label="Scroll up"><Tri dir="up" color="#666" /></ScrollButton>
              <ThumbV />
              <ScrollButton aria-label="Scroll down"><Tri dir="down" color="#666" /></ScrollButton>
            </ScrollV>
          </DocMain>
          <RecordBar>
            <RecordLabel>Record:</RecordLabel>
            <NavButton $w={16} aria-label="First record"><RecordArrow bar left /></NavButton>
            <NavButton $w={17} aria-label="Previous record"><RecordArrow left off /></NavButton>
            <RecordInput $w={51} aria-label="Current record" defaultValue="1 of 500" />
            <NavButton $w={20} aria-label="Next record"><RecordArrow /></NavButton>
            <NavButton $w={16} aria-label="Last record"><RecordArrow bar /></NavButton>
            <NavButton $w={17} aria-label="New record"><NewRecordArrow /></NavButton>
            <NoFilter><FunnelSmall x />No Filter</NoFilter>
            <RecordInput $w={71} aria-label="Search" placeholder="Search" />
            <ScrollH>
              <ScrollButton aria-label="Scroll left"><Tri dir="left" color="#555" /></ScrollButton>
              <ThumbH />
              <ScrollButton aria-label="Scroll right"><Tri dir="right" color="#555" /></ScrollButton>
            </ScrollH>
            <Corner />
          </RecordBar>
        </Doc>
        <Callout n={1} x={179} y={35} />
        <Callout n={2} x={331} y={35} flip />
        <Callout n={2} x={183} y={198} />
      </Body>
      <Status>
        Ready
        <StatusKey>Num Lock</StatusKey>
        <ViewButton $active aria-label="Datasheet View"><SheetView /></ViewButton>
        <ViewButton aria-label="Design View"><DesignView /></ViewButton>
      </Status>
    </Window>
  );
}
